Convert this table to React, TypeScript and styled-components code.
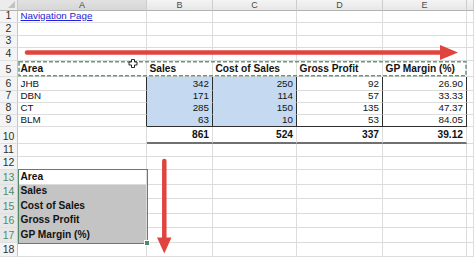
import React from "react";
import styled, { createGlobalStyle } from "styled-components";

const GlobalStyle = createGlobalStyle`
  html, body { margin: 0; padding: 0; background: #ffffff; }
  body { font-family: "Liberation Sans", Arial, sans-serif; overflow: hidden; }
  #root { width: 474px; height: 257px; }
`;

const COL_WIDTHS = [18, 129, 66, 84, 86, 84, 7];
const ROW_HEIGHTS = [11, 12, 13, 12, 13, 16, 14, 12, 12, 12, 17, 13, 13, 15, 14, 15, 14, 15, 14];
const GRID = "#dcdcdc";
const DARK = "#2e2e2e";
const BLUE = "#c5d9f1";
const GRAY = "#c4c4c4";
const GREEN = "#4f8a68";
const RED = "#e0443f";

const Sheet = styled.div`
  position: relative;
  display: grid;
  grid-template-columns: ${COL_WIDTHS.map((w) => `${w}px`).join(" ")};
  grid-template-rows: ${ROW_HEIGHTS.map((h) => `${h}px`).join(" ")};
  width: 474px;
  height: 257px;
  overflow: hidden;
  background: #ffffff;
`;

const Corner = styled.div`
  grid-row: 1;
  grid-column: 1;
  display: flex;
  justify-content: flex-end;
  align-items: flex-end;
  padding: 0 2px 2px 0;
  background: #ececec;
  border-right: 1px solid #c9c9c9;
  border-bottom: 1px solid #b3b3b3;
`;

const CornerTriangle = styled.span`
  width: 0;
  height: 0;
  border-left: 7px solid transparent;
  border-bottom: 7px solid #c2c2c2;
`;

const ColHeader = styled.div<{ $col: number; $selected?: boolean }>`
  grid-row: 1;
  grid-column: ${(p) => p.$col};
  display: flex;
  align-items: center;
  justify-content: center;
  font-size: 9px;
  line-height: 1;
  color: #4a4a4a;
  background: ${(p) =>
    p.$selected ? "linear-gradient(#e2e2e2, #d6d6d6)" : "linear-gradient(#f4f4f4, #e7e7e7)"};
  border-right: 1px solid #cdcdcd;
  border-bottom: 1px solid #b3b3b3;
`;

const RowHeader = styled.div<{ $row: number; $selected?: boolean }>`
  grid-row: ${(p) => p.$row};
  grid-column: 1;
  display: flex;
  align-items: flex-end;
  justify-content: center;
  padding-bottom: 1.5px;
  font-size: 10.5px;
  line-height: 1;
  color: ${(p) => (p.$selected ? GREEN : "#2f2f2f")};
  background: ${(p) => (p.$selected ? "#e8e8e8" : "#f4f4f4")};
  border-right: 1px solid #c6c6c6;
  border-bottom: 1px solid #e0e0e0;
`;

const Cell = styled.div<{
  $row: number;
  $col: number;
  $bold?: boolean;
  $right?: boolean;
  $fill?: string;
  $rb?: string;
  $bb?: string;
}>`
  grid-row: ${(p) => p.$row};
  grid-column: ${(p) => p.$col};
  display: flex;
  align-items: flex-end;
  justify-content: ${(p) => (p.$right ? "flex-end" : "flex-start")};
  padding: 0 3px 1.5px 2.5px;
  min-width: 0;
  background: ${(p) => p.$fill ?? "#ffffff"};
  border-right: 1px solid ${(p) => p.$rb ?? GRID};
  border-bottom: ${(p) => p.$bb ?? `1px solid ${GRID}`};
  font-size: ${(p) => (p.$bold ? "10.2px" : "9.8px")};
  font-weight: ${(p) => (p.$bold ? 700 : 400)};
  line-height: 1;
  color: #121212;
  white-space: nowrap;
`;

const Link = styled.span`
  color: #2323d4;
  text-decoration: underline;
  text-underline-offset: 1px;
`;

const Marquee = styled.div`
  grid-row: 6;
  grid-column: 2 / 7;
  z-index: 3;
  pointer-events: none;
  display: flex;
`;

const Selection = styled.div`
  grid-row: 14 / 19;
  grid-column: 2 / 3;
  z-index: 3;
  margin: -1px -1px -1px 0;
  border: 1.5px solid ${GREEN};
  pointer-events: none;
  display: flex;
  justify-content: flex-end;
  align-items: flex-end;
`;

const FillHandle = styled.span`
  width: 4px;
  height: 4px;
  margin: 0 -3px -3px 0;
  background: ${GREEN};
  border: 1px solid #ffffff;
`;

const Overlay = styled.svg`
  position: absolute;
  left: 0;
  top: 0;
  z-index: 5;
  pointer-events: none;
`;

type Spec = {
  text?: string;
  bold?: boolean;
  right?: boolean;
  fill?: string;
  rb?: string;
  bb?: string;
  link?: boolean;
};

const COL_LETTERS = ["A", "B", "C", "D", "E", ""];

const buildSheet = (): Spec[][] => {
  const s: Spec[][] = Array.from({ length: 18 }, () => Array.from({ length: 6 }, () => ({} as Spec)));
  s[0][0] = { text: "Navigation Page", link: true };

  ["Area", "Sales", "Cost of Sales", "Gross Profit", "GP Margin (%)"].forEach((t, i) => {
    s[4][i] = { text: t, bold: true };
  });

  const data: [string, string, string, string, string][] = [
    ["JHB", "342", "250", "92", "26.90"],
    ["DBN", "171", "114", "57", "33.33"],
    ["CT", "285", "150", "135", "47.37"],
    ["BLM", "63", "10", "53", "84.05"],
  ];
  data.forEach((r, i) => {
    const row = 5 + i;
    const last = i === data.length - 1;
    s[row][0] = { text: r[0], rb: DARK };
    s[row][1] = { text: r[1], right: true, fill: BLUE, rb: DARK, bb: `1px solid ${last ? DARK : BLUE}` };
    s[row][2] = { text: r[2], right: true, fill: BLUE, rb: DARK, bb: `1px solid ${last ? DARK : BLUE}` };
    s[row][3] = { text: r[3], right: true, rb: DARK, bb: last ? `1px solid ${DARK}` : undefined };
    s[row][4] = { text: r[4], right: true, rb: DARK, bb: last ? `1px solid ${DARK}` : undefined };
  });

  ["861", "524", "337", "39.12"].forEach((t, i) => {
    s[9][i + 1] = { text: t, bold: true, right: true, bb: "2px solid #707070" };
  });

  ["Area", "Sales", "Cost of Sales", "Gross Profit", "GP Margin (%)"].forEach((t, i) => {
    s[12 + i][0] =
      i === 0 ? { text: t, bold: true } : { text: t, bold: true, fill: GRAY, bb: `1px solid ${GRAY}` };
  });
  return s;
};

const SHEET = buildSheet();

const MARQUEE_W = COL_WIDTHS.slice(1, 6).reduce((a, b) => a + b, 0);
const MARQUEE_H = ROW_HEIGHTS[5];

export default function App() {
  return (
    <>
      <GlobalStyle />
      <Sheet>
        <Corner>
          <CornerTriangle />
        </Corner>
        {COL_LETTERS.map((l, i) => (
          <ColHeader key={i} $col={i + 2} $selected={i === 0}>
            {l}
          </ColHeader>
        ))}
        <ColHeader $col={8} />
        {SHEET.map((row, ri) => (
          <React.Fragment key={ri}>
            <RowHeader $row={ri + 2} $selected={ri + 1 >= 13 && ri + 1 <= 17}>
              {ri + 1}
            </RowHeader>
            {row.map((c, ci) => (
              <Cell
                key={ci}
                $row={ri + 2}
                $col={ci + 2}
                $bold={c.bold}
                $right={c.right}
                $fill={c.fill}
                $rb={c.rb}
                $bb={c.bb}
              >
                {c.link ? <Link>{c.text}</Link> : c.text}
              </Cell>
            ))}
          </React.Fragment>
        ))}

        <Marquee>
          <svg width={MARQUEE_W} height={MARQUEE_H}>
            <rect
              x={1}
              y={0.75}
              width={MARQUEE_W - 2}
              height={MARQUEE_H - 2}
              fill="none"
              stroke="#6c977f"
              strokeWidth={1.5}
              strokeDasharray="4 2"
            />
          </svg>
        </Marquee>

        <Selection>
          <FillHandle />
        </Selection>

        <Overlay width={474} height={257} viewBox="0 0 474 257">
          <line x1={27} y1={52.5} x2={443} y2={52.5} stroke={RED} strokeWidth={4.5} strokeLinecap="round" />
          <polygon points="440,45 458,52.5 440,60" fill={RED} />
          <line x1={164.3} y1={161} x2={164.3} y2={240} stroke={RED} strokeWidth={4.5} strokeLinecap="round" />
          <polygon points="157,237.5 171.5,237.5 164.3,253.5" fill={RED} />
          <path
            d="M131.5 59.5 h3 v2.5 h2.5 v3 h-2.5 v2.5 h-3 v-2.5 h-2.5 v-3 h2.5 z"
            fill="#ffffff"
            stroke="#111111"
            strokeWidth={0.9}
          />
        </Overlay>
      </Sheet>
    </>
  );
}
